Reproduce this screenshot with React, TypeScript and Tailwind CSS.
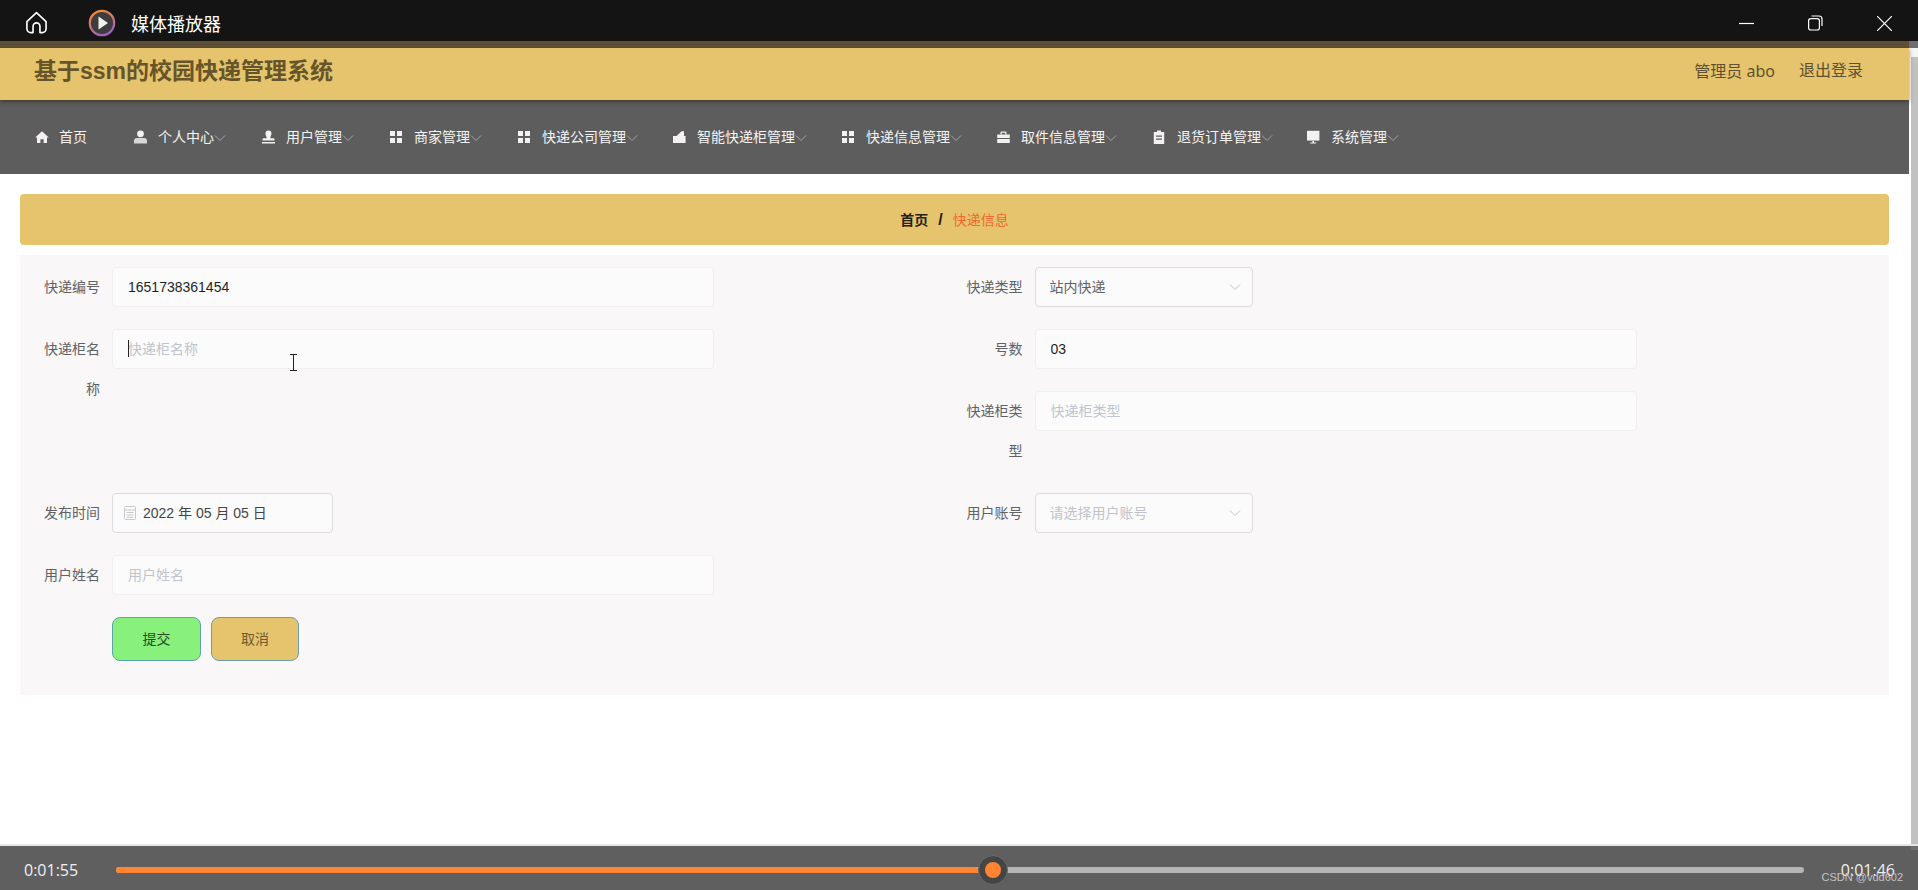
import React from "react";

const Chevron = () => (
  <svg width="12" height="12" viewBox="0 0 12 12" fill="none" stroke="#a3a3a3" strokeWidth="1" className="shrink-0 mt-[1px]">
    <path d="M1 3.5 L6 8.5 L11 3.5" />
  </svg>
);

const I = ({ children }: { children: React.ReactNode }) => (
  <svg width="14" height="14" viewBox="0 0 14 14" fill="#f3f1f1" fillRule="evenodd" className="shrink-0">
    {children}
  </svg>
);

const icons: Record<string, React.ReactNode> = {
  home: <I><path d="M7 1.2 L13.8 7.4 H12 V13 H8.6 V9.2 H5.4 V13 H2 V7.4 H0.2 Z" /></I>,
  person: (
    <I>
      <circle cx="6.5" cy="3.8" r="3.4" />
      <path fill="#d8d6d6" d="M0 13.5 V11 a3 3 0 0 1 3 -3 h7 a3 3 0 0 1 3 3 v2.5 Z" />
    </I>
  ),
  user: (
    <I>
      <path d="M6.5 0.5 a3 3 0 0 1 3 3 c0 2 -1.2 3.2 -1.2 4.7 h3 a1.2 1.2 0 0 1 1.2 1.2 V10.6 H0.5 V9.4 a1.2 1.2 0 0 1 1.2 -1.2 h3 C4.7 6.7 3.5 5.5 3.5 3.5 a3 3 0 0 1 3 -3 Z" />
      <rect x="0" y="12" width="13" height="1.5" />
    </I>
  ),
  grid: (
    <I>
      <rect x="0" y="1" width="5" height="5" />
      <rect x="7" y="1" width="5" height="5" />
      <rect x="0" y="8" width="5" height="5" />
      <rect x="7" y="8" width="5" height="5" />
    </I>
  ),
  shop: <I><path d="M0 13 V6 H3.5 L8.5 1.2 H11 V6 H12.6 V13 Z" /></I>,
  bag: (
    <I>
      <path d="M3.5 4.5 V2.6 a1.2 1.2 0 0 1 1.2 -1.2 h3.6 a1.2 1.2 0 0 1 1.2 1.2 V4.5 H8.2 V2.8 H4.8 V4.5 Z" />
      <path d="M0.2 4.5 H12.8 V8 H0.2 Z" />
      <path d="M0.2 9 H12.8 V13 H0.2 Z" />
    </I>
  ),
  order: (
    <I>
      <path d="M4 0.5 H8 V2 H11.2 V14 H0.8 V2 H4 Z M3 5.5 V6.7 H9 V5.5 Z M3 8.5 V9.7 H9 V8.5 Z" />
    </I>
  ),
  monitor: (
    <I>
      <path d="M0 0.8 H12.4 V10.6 H0 Z" />
      <path d="M5.4 11 H7 V12.6 H9.2 V13.6 H3.2 V12.6 H5.4 Z" />
    </I>
  ),
};

const navItems: [string, string, string][] = [
  ["home", "首页", "pr-[47px]"],
  ["person", "个人中心", "pr-9"],
  ["user", "用户管理", "pr-9"],
  ["grid", "商家管理", "pr-9"],
  ["grid", "快递公司管理", "pr-[35px]"],
  ["shop", "智能快递柜管理", "pr-[35px]"],
  ["grid", "快递信息管理", "pr-[35px]"],
  ["bag", "取件信息管理", "pr-9"],
  ["order", "退货订单管理", "pr-[34px]"],
  ["monitor", "系统管理", "pr-9"],
];

const Label = ({ children }: { children: React.ReactNode }) => (
  <label className="w-20 shrink-0 pr-3 text-right text-sm leading-10 text-[#606266] break-all">{children}</label>
);

const TextField = ({ value, placeholder }: { value?: string; placeholder?: string }) => (
  <input
    readOnly
    value={value ?? ""}
    placeholder={placeholder}
    className="w-[602px] h-10 px-[15px] rounded border border-[#f1f0f1] bg-[#fbfbfb] text-sm text-[#1f1f1f] placeholder:text-[#c0c4cc] outline-none"
  />
);

const SelectBox = ({ text, muted }: { text: string; muted?: boolean }) => (
  <div className={`w-[218px] h-10 pl-[14px] pr-[11px] flex items-center justify-between rounded border border-[#dcdcdf] bg-[#fbfbfb] ${muted ? "text-[#c0c4cc]" : "text-[#606266]"}`}>
    <span className="text-sm">{text}</span>
    <svg width="12" height="12" viewBox="0 0 12 12" fill="none" stroke="#c0c4cc" strokeWidth="1">
      <path d="M1 3.5 L6 8.5 L11 3.5" />
    </svg>
  </div>
);

const Col = ({ children }: { children: React.ReactNode }) => <div className="w-[923px] flex">{children}</div>;

export default function App() {
  return (
    <div className="w-[1918px] h-[890px] overflow-hidden flex flex-col relative bg-white font-['Liberation_Sans','Noto_Sans_CJK_SC',sans-serif]">
      {/* title bar */}
      <div className="h-[41px] shrink-0 bg-[#141414] flex items-center pt-[5px] pr-[26px] pl-[25px] text-white">
        <svg width="23" height="24" viewBox="0 0 24 24" fill="none" stroke="#fff" strokeWidth="1.7" strokeLinejoin="round">
          <path d="M2 10.5 L12 1.2 L22 10.5 V18 a4 4 0 0 1 -4 4 h-2.4 V15.5 a3.6 3.6 0 0 0 -7.2 0 V22 H6 a4 4 0 0 1 -4 -4 Z" />
        </svg>
        <svg width="28" height="28" viewBox="0 0 28 28" className="ml-[40px]">
          <defs>
            <linearGradient id="ring" x1="0.3" y1="0" x2="0.7" y2="1">
              <stop offset="0" stopColor="#f58a3c" />
              <stop offset="1" stopColor="#9a5fc4" />
            </linearGradient>
          </defs>
          <circle cx="14" cy="14" r="12.2" fill="#3d3d3d" stroke="url(#ring)" strokeWidth="2.2" />
          <path d="M10.5 7.5 L20 14 L10.5 20.5 Z" fill="#f2f2f2" />
        </svg>
        <span className="ml-[15px] text-lg font-['Noto_Sans_CJK_SC',sans-serif]">媒体播放器</span>
        <svg width="15" height="15" viewBox="0 0 15 15" className="ml-auto" stroke="#fff" strokeWidth="1.2" fill="none">
          <path d="M0 7.5 H15" />
        </svg>
        <svg width="15" height="16" viewBox="0 0 15 16" className="ml-[54px]" stroke="#fff" strokeWidth="1.2" fill="none">
          <rect x="0.6" y="3.6" width="10.8" height="11.4" rx="2.2" />
          <path d="M3.5 1 H11 a3 3 0 0 1 3 3 V11" />
        </svg>
        <svg width="15" height="15" viewBox="0 0 15 15" className="ml-[54px]" stroke="#fff" strokeWidth="1.2" fill="none">
          <path d="M0 0 L15 15 M15 0 L0 15" />
        </svg>
      </div>

      <div className="flex-1 flex min-h-0">
        <div className="flex-1 min-w-0 flex flex-col">
          <div className="h-[7px] shrink-0 bg-[#5c4f35]" />
          {/* header */}
          <header className="h-[52px] shrink-0 relative z-10 bg-[#e6c46d] shadow-[0_2px_4px_rgba(40,35,20,0.55)] flex items-center justify-between pb-[6px] pl-[34px] pr-[46px]">
            <h1 className="text-[23px] font-bold text-[#67552a]">基于ssm的校园快递管理系统</h1>
            <div className="flex gap-6 text-base text-[#5f512f]">
              <span className="font-['Noto_Sans','Noto_Sans_CJK_SC',sans-serif]">管理员 abo</span>
              <span>退出登录</span>
            </div>
          </header>
          {/* nav */}
          <nav className="h-[74px] shrink-0 bg-[#5e5d5d] flex items-center pl-[35px] text-sm text-[#f5f4f4]">
            {navItems.map(([icon, text, pad], i) => (
              <div key={i} className={`flex items-center ${pad}`}>
                {icons[icon]}
                <span className="ml-[10px]">{text}</span>
                {i > 0 && <Chevron />}
              </div>
            ))}
          </nav>
          {/* content */}
          <main className="flex-1 min-h-0 pt-5 px-5 bg-white">
            <div className="h-[51px] rounded bg-[#e6c46d] flex items-center justify-center text-sm">
              <span className="font-bold text-[#262015]">首页</span>
              <span className="mx-[10px] text-base font-bold text-[#262015]">/</span>
              <span className="text-[#ee6a2e]">快递信息</span>
            </div>
            <form className="mt-[10px] bg-[#f9f7f8] p-3">
              <div className="flex mb-[22px]">
                <Col>
                  <Label>快递编号</Label>
                  <TextField value="1651738361454" />
                </Col>
                <Col>
                  <Label>快递类型</Label>
                  <SelectBox text="站内快递" />
                </Col>
              </div>
              <div className="flex mb-[22px]">
                <Col>
                  <Label>快递柜名称</Label>
                  <div className="relative h-10">
                    <TextField placeholder="快递柜名称" />
                    <span className="absolute left-4 top-[11px] w-px h-[17px] bg-[#222]" />
                  </div>
                </Col>
                <div className="w-[923px] flex flex-col gap-[22px]">
                  <div className="flex">
                    <Label>号数</Label>
                    <TextField value="03" />
                  </div>
                  <div className="flex">
                    <Label>快递柜类型</Label>
                    <TextField placeholder="快递柜类型" />
                  </div>
                </div>
              </div>
              <div className="flex mb-[22px]">
                <Col>
                  <Label>发布时间</Label>
                  <div className="w-[221px] h-10 pl-[11px] flex items-center rounded border border-[#dcdcdf] bg-[#fbfbfb] text-sm text-[#444]">
                    <svg width="12" height="14" viewBox="0 0 12 14" fill="none" stroke="#c8c8d0" strokeWidth="1">
                      <rect x="0.5" y="0.5" width="11" height="13" rx="1" />
                      <path d="M0.5 4 H11.5 M2.5 6.5 H9.5 M2.5 9 H9.5 M2.5 11.3 H9.5" />
                    </svg>
                    <span className="ml-[7px]">2022 年 05 月 05 日</span>
                  </div>
                </Col>
                <Col>
                  <Label>用户账号</Label>
                  <SelectBox text="请选择用户账号" muted />
                </Col>
              </div>
              <div className="flex mb-[22px]">
                <Col>
                  <Label>用户姓名</Label>
                  <TextField placeholder="用户姓名" />
                </Col>
              </div>
              <div className="flex gap-[10px] ml-20 mb-[22px]">
                <button type="button" className="w-[89px] h-11 rounded-lg border border-[#5da3ad] bg-[#88f17c] text-sm text-[#2a4a25]">提交</button>
                <button type="button" className="w-[88px] h-11 rounded-lg border border-[#6a9fad] bg-[#e6c46d] text-sm text-[#6b5a30]">取消</button>
              </div>
            </form>
          </main>
        </div>
        {/* scrollbar */}
        <div className="w-[9px] shrink-0 flex flex-col bg-white">
          <div className="h-[7px] bg-[#6f6f6f]" />
          <div className="h-[9px] bg-[#f4f4f4]" />
          <div className="flex-1 ml-[2px] bg-[#c1c1c1]" />
        </div>
      </div>

      {/* player bar */}
      <div className="h-[46px] shrink-0 border-t-2 border-[#e6e6e6] bg-[#5f5f5f] flex items-center pt-1 pl-6 pr-[23px] text-[#efefef] text-base font-['Open_Sans',sans-serif]">
        <span className="w-[92px] shrink-0">0:01:55</span>
        <div className="w-[1688px] h-[6px] shrink-0 rounded-full bg-[#b5b5b5] flex items-center">
          <div className="w-[877px] h-full rounded-l-full bg-[#ff8433]" />
          <div className="w-[30px] h-[30px] -ml-[15px] shrink-0 rounded-full bg-[#454545] border border-[#6a6a6a] flex items-center justify-center">
            <div className="w-4 h-4 rounded-full bg-[#ff8433]" />
          </div>
        </div>
        <span className="ml-auto">0:01:46</span>
      </div>

      {/* overlays */}
      <span className="absolute right-0 top-[846px] w-[7px] h-1 bg-[#6e6e6e]" />
      <svg width="9" height="17" viewBox="0 0 9 17" className="absolute left-[289px] top-[354px]" fill="none" stroke="#222" strokeWidth="1">
        <path d="M1 0.5 H8 M1 16.5 H8 M4.5 0.5 V16.5" />
      </svg>
      <span className="absolute right-[15px] top-[869px] text-[11px] text-[#c2c2c2] font-['Liberation_Sans',sans-serif]">CSDN @vdd602</span>
    </div>
  );
}
